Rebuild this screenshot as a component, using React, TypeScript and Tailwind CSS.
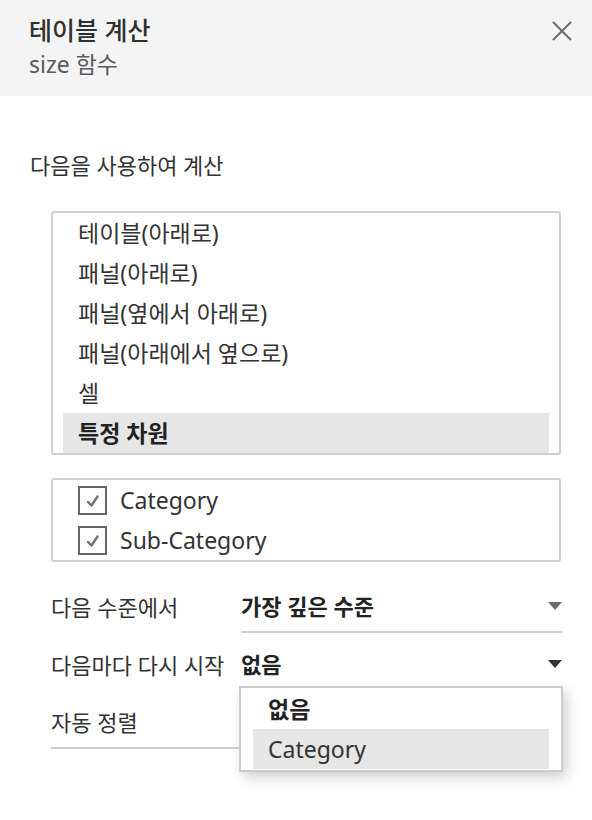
import { useState } from "react"

const methods = [
  "테이블(아래로)",
  "패널(아래로)",
  "패널(옆에서 아래로)",
  "패널(아래에서 옆으로)",
  "셀",
  "특정 차원",
]

const dims = ["Category", "Sub-Category"]

function Caret({ dark }: { dark?: boolean }) {
  return (
    <svg width="14" height="8" viewBox="0 0 14 8" className="shrink-0">
      <polygon points="0,0 14,0 7,8" fill={dark ? "#333333" : "#6b6b6b"} />
    </svg>
  )
}

function Check() {
  return (
    <span className="flex h-[29px] w-[29px] shrink-0 items-center justify-center border-2 border-[#666666]">
      <svg width="16" height="16" viewBox="0 0 16 16" className="mt-[2px]">
        <path d="M3 9 L6.5 12.5 L12.5 3.5" fill="none" stroke="#707070" strokeWidth="2.4" strokeLinecap="round" strokeLinejoin="round" />
      </svg>
    </span>
  )
}

export default function App() {
  const [selected] = useState(5)

  return (
    <div className="min-h-[820px] w-[592px] bg-white font-['Noto_Sans','Noto_Sans_CJK_KR',sans-serif] text-[#333333]">
      <div className="flex h-[96px] justify-between bg-[#f4f4f4] pl-[29px] pr-[20px] pt-[15px]">
        <div>
          <div className="text-[25px] font-medium leading-[30px] text-[#2f2f2f]">테이블 계산</div>
          <div className="mt-[4px] text-[23px] leading-[30px] text-[#5a5a5a]">size 함수</div>
        </div>
        <button className="mt-[6px] h-[20px] w-[20px]">
          <svg width="20" height="20" viewBox="0 0 20 20">
            <path d="M1 1 L19 19 M19 1 L1 19" stroke="#6b6b6b" strokeWidth="2" />
          </svg>
        </button>
      </div>

      <div className="pl-[30px] pt-[54px] text-[22px] leading-[30px]">다음을 사용하여 계산</div>

      <div className="ml-[51px] mr-[31px] mt-[31px] rounded-[3px] border-2 border-[#d0d0d0] px-[10px] text-[23px]">
        {methods.map((m, i) => (
          <div
            key={m}
            className={`flex h-[40px] items-center px-[15px] ${
              i === selected ? "bg-[#e6e6e6] font-bold text-[#222222]" : ""
            }`}
          >
            {m}
          </div>
        ))}
      </div>

      <div className="ml-[51px] mr-[31px] mt-[23px] rounded-[3px] border-2 border-[#d0d0d0] text-[23px]">
        {dims.map((d) => (
          <div key={d} className="flex h-[40px] items-center gap-[13px] pl-[25px]">
            <Check />
            <span>{d}</span>
          </div>
        ))}
      </div>

      <div className="ml-[51px] mr-[30px] mt-[25px] flex flex-col gap-[12px] text-[22px]">
        <div className="flex h-[46px]">
          <div className="flex w-[190px] items-center pb-[6px]">다음 수준에서</div>
          <div className="flex flex-1 items-center justify-between border-b-2 border-[#cfcfcf] pb-[6px]">
            <span className="font-bold text-[#222222]">가장 깊은 수준</span>
            <Caret />
          </div>
        </div>

        <div className="flex h-[46px]">
          <div className="flex w-[190px] items-center pb-[6px]">다음마다 다시 시작</div>
          <div className="relative flex flex-1 items-center justify-between border-b-2 border-[#cfcfcf] pb-[6px]">
            <span className="font-bold text-[#222222]">없음</span>
            <Caret dark />
            <div className="absolute left-[-2px] right-[-1px] top-[calc(100%-3px)] z-10 border-2 border-[#cccccc] bg-white px-[12px] pb-px pt-px text-[23px] shadow-[4px_6px_12px_rgba(0,0,0,0.18)]">
              <div className="flex h-[40px] items-center px-[15px] font-bold text-[#222222]">없음</div>
              <div className="flex h-[40px] items-center bg-[#e6e6e6] px-[15px]">Category</div>
            </div>
          </div>
        </div>

        <div className="flex h-[46px] items-center border-b-2 border-[#cfcfcf] pb-[6px]">자동 정렬</div>
      </div>
    </div>
  )
}
